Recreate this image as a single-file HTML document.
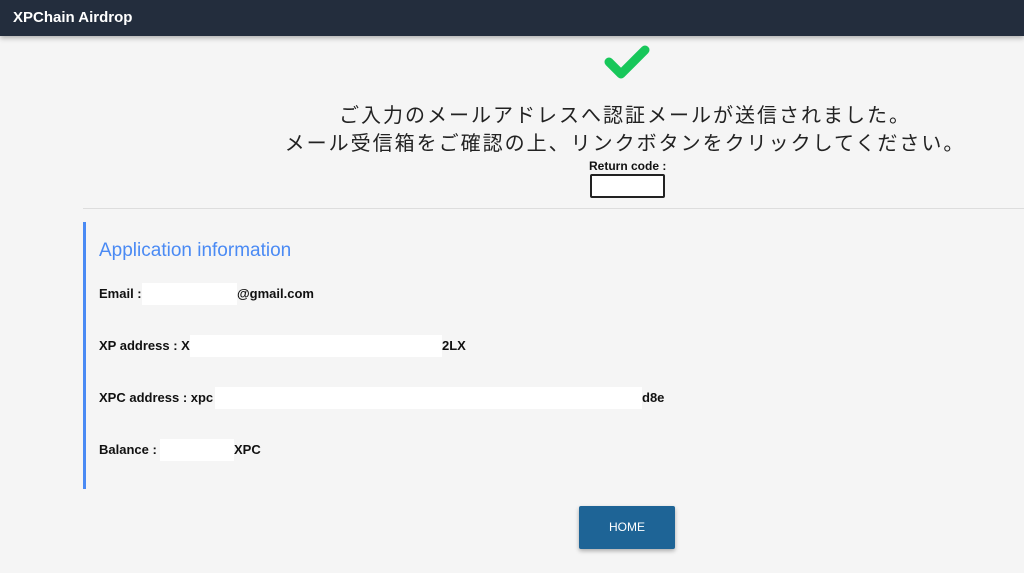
<!DOCTYPE html>
<html><head><meta charset="utf-8"><style>
body{margin:0;width:1024px;height:573px;background:#f5f5f5;font-family:"Liberation Sans","Noto Sans CJK JP",sans-serif;position:relative;overflow:hidden}
.hdr{position:absolute;left:0;top:0;width:1024px;height:36px;background:#232d3d;box-shadow:0 2px 5px rgba(0,0,0,.3)}
.hdr span{position:absolute;left:13px;top:9px;color:#fff;font-size:15px;font-weight:bold}
.jp{position:absolute;left:0;width:1250px;text-align:center;font-size:20px;letter-spacing:2px;color:#222}
.t{position:absolute;font-size:13px;font-weight:bold;color:#111}
.w{position:absolute;background:#fff}
</style></head><body>
<div class="hdr"><span>XPChain Airdrop</span></div>
<svg style="position:absolute;left:602px;top:45px" width="50" height="38" viewBox="0 0 50 38"><path d="M7 17 L19 29 L43 5" fill="none" stroke="#17c75a" stroke-width="9" stroke-linecap="round" stroke-linejoin="round"/></svg>
<div class="jp" style="top:99px">ご入力のメールアドレスへ認証メールが送信されました。</div>
<div class="jp" style="top:127px">メール受信箱をご確認の上、リンクボタンをクリックしてください。</div>
<div class="t" style="left:589px;top:159px;font-size:12px">Return code :</div>
<div style="position:absolute;left:590px;top:174px;width:71px;height:20px;border:2px solid #222;border-radius:2px;background:#fff"></div>
<div style="position:absolute;left:83px;top:208px;width:941px;height:1px;background:#ddd"></div>
<div style="position:absolute;left:83px;top:222px;width:3px;height:267px;background:#4a8af4"></div>
<div style="position:absolute;left:99px;top:240px;font-size:19px;color:#4a8af4">Application information</div>
<div class="t" style="left:99px;top:286px">Email :</div><div class="w" style="left:142px;top:283px;width:95px;height:22px"></div><div class="t" style="left:237px;top:286px">@gmail.com</div>
<div class="t" style="left:99px;top:338px">XP address : X</div><div class="w" style="left:190px;top:335px;width:252px;height:22px"></div><div class="t" style="left:442px;top:338px">2LX</div>
<div class="t" style="left:99px;top:390px">XPC address : xpc</div><div class="w" style="left:215px;top:387px;width:427px;height:22px"></div><div class="t" style="left:642px;top:390px">d8e</div>
<div class="t" style="left:99px;top:442px">Balance :</div><div class="w" style="left:160px;top:439px;width:74px;height:22px"></div><div class="t" style="left:234px;top:442px">XPC</div>
<div style="position:absolute;left:579px;top:506px;width:96px;height:43px;background:#1e6496;border-radius:2px;box-shadow:0 2px 4px rgba(0,0,0,.3);color:#fff;font-size:12px;text-align:center;line-height:43px">HOME</div>
</body></html>
